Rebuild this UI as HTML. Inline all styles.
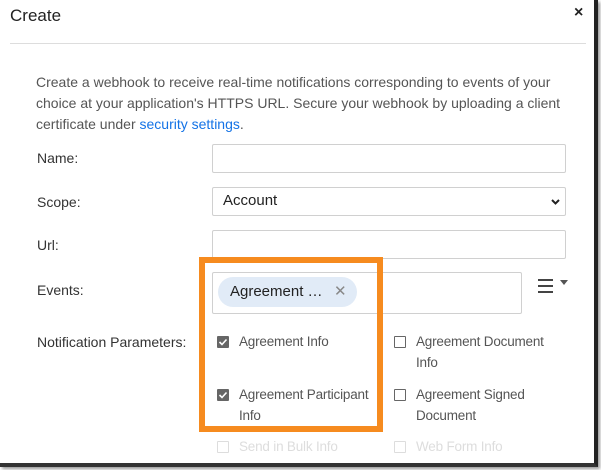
<!DOCTYPE html>
<html><head><style>
body{margin:0;width:601px;height:470px;background:#fff;position:relative;overflow:hidden;font-family:"Liberation Sans",sans-serif;}
.a{position:absolute;}
.lbl{position:absolute;left:37px;font-size:14px;color:#333;}
.inp{position:absolute;left:212px;width:352px;height:27px;border:1px solid #d0d0d0;border-radius:2px;background:#fff;}
.cb{position:absolute;width:10px;height:10px;border:1.5px solid #666;border-radius:1px;}
.cb.on{background:#666;}
.cb.on svg{position:absolute;left:0;top:0;}
.ct{position:absolute;font-size:13.5px;color:#555;line-height:21px;letter-spacing:-0.2px;}
</style></head><body>
<div class="a" style="left:0;top:0;width:594px;height:463px;border-right:4px solid #222;border-bottom:4px solid #333;box-shadow:2px 2px 3px #999;"></div>
<div class="a" style="left:10px;top:6px;font-size:17px;color:#222;">Create</div>
<div class="a" style="left:574px;top:4px;font-size:16px;font-weight:bold;color:#222;">×</div>
<div class="a" style="left:10px;top:43px;width:576px;height:1px;background:#ddd;"></div>
<div class="a" style="left:36px;top:72px;width:540px;font-size:14px;line-height:21px;color:#555;">Create a webhook to receive real-time notifications corresponding to events of your choice at your application's HTTPS URL. Secure your webhook by uploading a client certificate under <span style="color:#1473e6">security settings</span>.</div>
<div class="lbl" style="top:150px;">Name:</div>
<div class="inp" style="top:144px;"></div>
<div class="lbl" style="top:194px;">Scope:</div>
<div class="inp" style="top:187px;"><span class="a" style="left:10px;top:4px;font-size:15px;color:#222;">Account</span>
<svg class="a" style="right:5px;top:11px;" width="9" height="6" viewBox="0 0 9 6"><path d="M1 1 L4.5 4.5 L8 1" stroke="#222" stroke-width="2" fill="none"/></svg></div>
<div class="lbl" style="top:237px;">Url:</div>
<div class="inp" style="top:230px;"></div>
<div class="lbl" style="top:282px;">Events:</div>
<div class="a" style="left:212px;top:272px;width:308px;height:40px;border:1px solid #d0d0d0;border-radius:2px;"></div>
<div class="a" style="left:218px;top:277px;width:139px;height:30px;border-radius:15px;background:#e1ebf7;"><span class="a" style="left:12px;top:6px;font-size:15px;color:#222;">Agreement …</span><span class="a" style="left:116px;top:5px;font-size:15px;color:#888;">✕</span></div>
<div class="a" style="left:538px;top:279px;width:15px;">
<div style="height:2px;background:#444;margin-bottom:4px"></div><div style="height:2px;background:#444;margin-bottom:4px"></div><div style="height:2px;background:#444"></div></div>
<div class="a" style="left:560px;top:280px;width:0;height:0;border-left:4px solid transparent;border-right:4px solid transparent;border-top:5px solid #555;"></div>
<div class="lbl" style="top:334px;">Notification Parameters:</div>
<div class="cb on" style="left:217px;top:336px;"><svg width="10" height="10" viewBox="0 0 10 10"><path d="M1.5 5 L4 7.5 L8.5 2.5" stroke="#fff" stroke-width="1.6" fill="none"/></svg></div><div class="ct" style="left:239px;top:331px;">Agreement Info</div>
<div class="cb" style="left:394px;top:336px;"></div><div class="ct" style="left:416px;top:331px;">Agreement Document<br>Info</div>
<div class="cb on" style="left:217px;top:389px;"><svg width="10" height="10" viewBox="0 0 10 10"><path d="M1.5 5 L4 7.5 L8.5 2.5" stroke="#fff" stroke-width="1.6" fill="none"/></svg></div><div class="ct" style="left:239px;top:384px;">Agreement Participant<br>Info</div>
<div class="cb" style="left:394px;top:389px;"></div><div class="ct" style="left:416px;top:384px;">Agreement Signed<br>Document</div>
<div class="cb" style="left:217px;top:441px;border-color:#ddd;"></div><div class="ct" style="left:239px;top:436px;color:#ddd;">Send in Bulk Info</div>
<div class="cb" style="left:394px;top:441px;border-color:#ddd;"></div><div class="ct" style="left:416px;top:436px;color:#ddd;">Web Form Info</div>
<div class="a" style="left:199px;top:257px;width:172px;height:163px;border:6px solid #f68b1f;"></div>
</body></html>
